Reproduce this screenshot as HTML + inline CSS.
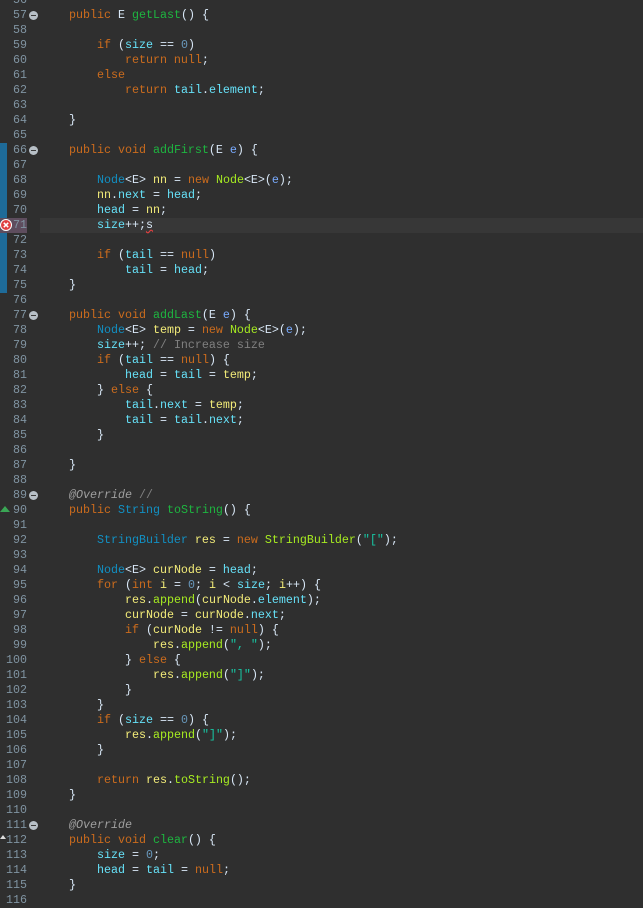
<!DOCTYPE html>
<html><head><meta charset="utf-8"><style>
html,body{margin:0;padding:0;width:643px;height:906px;overflow:hidden;background:#2f2f2f;}
.l{position:absolute;left:0;height:15px;width:643px;font:11.67px/15px "Liberation Mono",monospace;color:#d9e8f7;white-space:pre;}
.n{position:absolute;left:0;width:27px;text-align:right;color:#8094a2;}
.c{position:absolute;left:69px;}
.k{color:#cc6c1d}.t{color:#1290c3}.f{color:#66e1f8}.m{color:#1eb540}.mc{color:#a7ec21}.v{color:#f3ec79}.p{color:#79abff}.nu{color:#6897bb}.s{color:#17c6a3}.a{color:#a0a0a0;font-style:italic}.cm{color:#808080}
.fold{position:absolute;left:29px;top:3px;width:9px;height:9px;border-radius:50%;background:#b7bfc6;}
.fold:after{content:"";position:absolute;left:2px;top:4px;width:5px;height:1px;background:#3a3a3a;}
</style></head><body>
<div style="position:absolute;left:0;top:143px;width:7px;height:150px;background:#1e6b99"></div>
<div style="position:absolute;left:40px;top:218px;width:603px;height:15px;background:#373737"></div>
<div style="position:absolute;left:0;top:218px;width:27px;height:15px;background:#5e4d5e"></div>
<div id="lines"></div>
<div style="position:absolute;left:0;top:218px;width:12px;height:12px;"><svg width="12" height="14"><circle cx="6" cy="7" r="5.5" fill="#e04040" stroke="#fff" stroke-width="1"/><path d="M3.8 4.8l4.4 4.4M8.2 4.8l-4.4 4.4" stroke="#fff" stroke-width="1.5"/></svg></div>
<svg style="position:absolute;left:0;top:505px" width="10" height="8"><path d="M0 7L5 1L10 7Z" fill="#3aa655"/></svg>
<svg style="position:absolute;left:0;top:835px" width="6" height="5"><path d="M0 4L3 0L6 4Z" fill="#ddd"/></svg>
<script>
var L={
56:'',
57:'<span class="k">public</span> E <span class="m">getLast</span>() {',
58:'',
59:'    <span class="k">if</span> (<span class="f">size</span> == <span class="nu">0</span>)',
60:'        <span class="k">return null</span>;',
61:'    <span class="k">else</span>',
62:'        <span class="k">return</span> <span class="f">tail</span>.<span class="f">element</span>;',
63:'',
64:'}',
65:'',
66:'<span class="k">public void</span> <span class="m">addFirst</span>(E <span class="p">e</span>) {',
67:'',
68:'    <span class="t">Node</span>&lt;E&gt; <span class="v">nn</span> = <span class="k">new</span> <span class="mc">Node</span>&lt;E&gt;(<span class="p">e</span>);',
69:'    <span class="v">nn</span>.<span class="f">next</span> = <span class="f">head</span>;',
70:'    <span class="f">head</span> = <span class="v">nn</span>;',
71:'    <span class="f">size</span>++;<span style="text-decoration:underline wavy #e04040">s</span>',
72:'',
73:'    <span class="k">if</span> (<span class="f">tail</span> == <span class="k">null</span>)',
74:'        <span class="f">tail</span> = <span class="f">head</span>;',
75:'}',
76:'',
77:'<span class="k">public void</span> <span class="m">addLast</span>(E <span class="p">e</span>) {',
78:'    <span class="t">Node</span>&lt;E&gt; <span class="v">temp</span> = <span class="k">new</span> <span class="mc">Node</span>&lt;E&gt;(<span class="p">e</span>);',
79:'    <span class="f">size</span>++; <span class="cm">// Increase size</span>',
80:'    <span class="k">if</span> (<span class="f">tail</span> == <span class="k">null</span>) {',
81:'        <span class="f">head</span> = <span class="f">tail</span> = <span class="v">temp</span>;',
82:'    } <span class="k">else</span> {',
83:'        <span class="f">tail</span>.<span class="f">next</span> = <span class="v">temp</span>;',
84:'        <span class="f">tail</span> = <span class="f">tail</span>.<span class="f">next</span>;',
85:'    }',
86:'',
87:'}',
88:'',
89:'<span class="a">@Override</span> <span class="cm">//</span>',
90:'<span class="k">public</span> <span class="t">String</span> <span class="m">toString</span>() {',
91:'',
92:'    <span class="t">StringBuilder</span> <span class="v">res</span> = <span class="k">new</span> <span class="mc">StringBuilder</span>(<span class="s">"["</span>);',
93:'',
94:'    <span class="t">Node</span>&lt;E&gt; <span class="v">curNode</span> = <span class="f">head</span>;',
95:'    <span class="k">for</span> (<span class="k">int</span> <span class="v">i</span> = <span class="nu">0</span>; <span class="v">i</span> &lt; <span class="f">size</span>; <span class="v">i</span>++) {',
96:'        <span class="v">res</span>.<span class="mc">append</span>(<span class="v">curNode</span>.<span class="f">element</span>);',
97:'        <span class="v">curNode</span> = <span class="v">curNode</span>.<span class="f">next</span>;',
98:'        <span class="k">if</span> (<span class="v">curNode</span> != <span class="k">null</span>) {',
99:'            <span class="v">res</span>.<span class="mc">append</span>(<span class="s">", "</span>);',
100:'        } <span class="k">else</span> {',
101:'            <span class="v">res</span>.<span class="mc">append</span>(<span class="s">"]"</span>);',
102:'        }',
103:'    }',
104:'    <span class="k">if</span> (<span class="f">size</span> == <span class="nu">0</span>) {',
105:'        <span class="v">res</span>.<span class="mc">append</span>(<span class="s">"]"</span>);',
106:'    }',
107:'',
108:'    <span class="k">return</span> <span class="v">res</span>.<span class="mc">toString</span>();',
109:'}',
110:'',
111:'<span class="a">@Override</span>',
112:'<span class="k">public void</span> <span class="m">clear</span>() {',
113:'    <span class="f">size</span> = <span class="nu">0</span>;',
114:'    <span class="f">head</span> = <span class="f">tail</span> = <span class="k">null</span>;',
115:'}',
116:''};
var folds={57:1,66:1,77:1,89:1,111:1};
var h='';
for(var n=56;n<=116;n++){
 h+='<div class="l" style="top:'+(8+(n-57)*15)+'px"><span class="n">'+n+'</span>'+(folds[n]?'<span class="fold"></span>':'')+'<span class="c">'+L[n]+'</span></div>';
}
document.getElementById('lines').innerHTML=h;
</script>
</body></html>
